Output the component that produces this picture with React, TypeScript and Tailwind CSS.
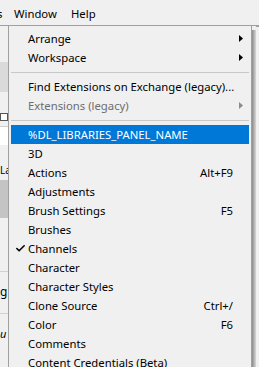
import { Check } from 'lucide-react';

type Item =
  | { kind: 'sep' }
  | {
      kind: 'item';
      label: string;
      shortcut?: string;
      sub?: boolean;
      disabled?: boolean;
      active?: boolean;
      checked?: boolean;
    };

const items: Item[] = [
  { kind: 'item', label: 'Arrange', sub: true },
  { kind: 'item', label: 'Workspace', sub: true },
  { kind: 'sep' },
  { kind: 'item', label: 'Find Extensions on Exchange (legacy)...' },
  { kind: 'item', label: 'Extensions (legacy)', sub: true, disabled: true },
  { kind: 'sep' },
  { kind: 'item', label: '%DL_LIBRARIES_PANEL_NAME', active: true },
  { kind: 'item', label: '3D' },
  { kind: 'item', label: 'Actions', shortcut: 'Alt+F9' },
  { kind: 'item', label: 'Adjustments' },
  { kind: 'item', label: 'Brush Settings', shortcut: 'F5' },
  { kind: 'item', label: 'Brushes' },
  { kind: 'item', label: 'Channels', checked: true },
  { kind: 'item', label: 'Character' },
  { kind: 'item', label: 'Character Styles' },
  { kind: 'item', label: 'Clone Source', shortcut: 'Ctrl+/' },
  { kind: 'item', label: 'Color', shortcut: 'F6' },
  { kind: 'item', label: 'Comments' },
  { kind: 'item', label: 'Content Credentials (Beta)' },
];

const Arrow = ({ disabled }: { disabled?: boolean }) => (
  <svg width="4" height="7" viewBox="0 0 4 7" className="absolute right-[6px] top-[6px]">
    <path d="M0 0 L4 3.5 L0 7 Z" fill={disabled ? '#8a8a8a' : '#000'} />
  </svg>
);

const MenuRow = ({ item }: { item: Item }) => {
  if (item.kind === 'sep') {
    return (
      <div className="h-[10px] flex items-center">
        <div className="h-px w-full bg-[#c8c8c8]" />
      </div>
    );
  }
  const color = item.active ? 'text-white bg-[#0078d7]' : item.disabled ? 'text-[#6d6d6d]' : 'text-black';
  return (
    <div className={`relative h-[19px] flex items-center pl-[17px] pr-[16px] ${color}`}>
      {item.checked && (
        <Check size={11} strokeWidth={3.5} className="absolute left-[4px] top-[4px] text-black" />
      )}
      <span className="flex-1 whitespace-nowrap">{item.label}</span>
      {item.shortcut && <span className="whitespace-nowrap">{item.shortcut}</span>}
      {item.sub && <Arrow disabled={item.disabled} />}
    </div>
  );
};

export default function App() {
  return (
    <div
      className="relative w-[259px] h-[367px] overflow-hidden bg-[#f0f0f0] text-[11.3px] leading-none"
      style={{ fontFamily: '"Noto Sans", "Segoe UI", sans-serif' }}
    >
      <div className="h-[26px] flex items-center pt-[3px] text-[11.3px] text-black border-b border-[#a0a0a0]">
        <span className="w-[14px] -ml-[3px]">s</span>
        <span className="w-[60px] pl-[3px]">Window</span>
        <span>Help</span>
      </div>

      {/* panel strip behind the menu */}
      <div className="w-[8px] flex flex-col">
        <div className="h-[36px]" />
        <div className="h-[30px] bg-[#dadada]" />
        <div className="h-[21px]" />
        <div className="h-[8px] border border-[#555] bg-white" />
        <div className="h-[6px] border-b border-[#cfcfcf]" />
        <div className="h-[18px] bg-white" />
        <div className="h-[30px] text-[10px] pt-[20px]">La</div>
        <div className="h-[5px]" />
        <div className="h-[38px] bg-[#c4c4c4]" />
        <div className="h-[54px] border-b border-[#d0d0d0]" />
        <div className="h-[42px] border-b border-[#d0d0d0] pt-[14px] text-[12px]">g</div>
        <div className="pt-[14px] italic text-[11px]">u</div>
      </div>

      {/* dropdown */}
      <div className="absolute left-[8px] top-[25px] w-[244px] h-[360px] border border-[#a0a0a0] bg-[#f0f0f0] px-[2px] pt-[3px]">
        {items.map((it, i) => (
          <MenuRow key={i} item={it} />
        ))}
      </div>
      <div className="absolute left-[252px] top-[30px] w-[4px] h-[340px] bg-gradient-to-r from-[#8a8a8a] to-[#d8d8d8]" />
      <div className="absolute left-[256px] top-[26px] w-[3px] h-px bg-[#a0a0a0]" />
    </div>
  );
}
